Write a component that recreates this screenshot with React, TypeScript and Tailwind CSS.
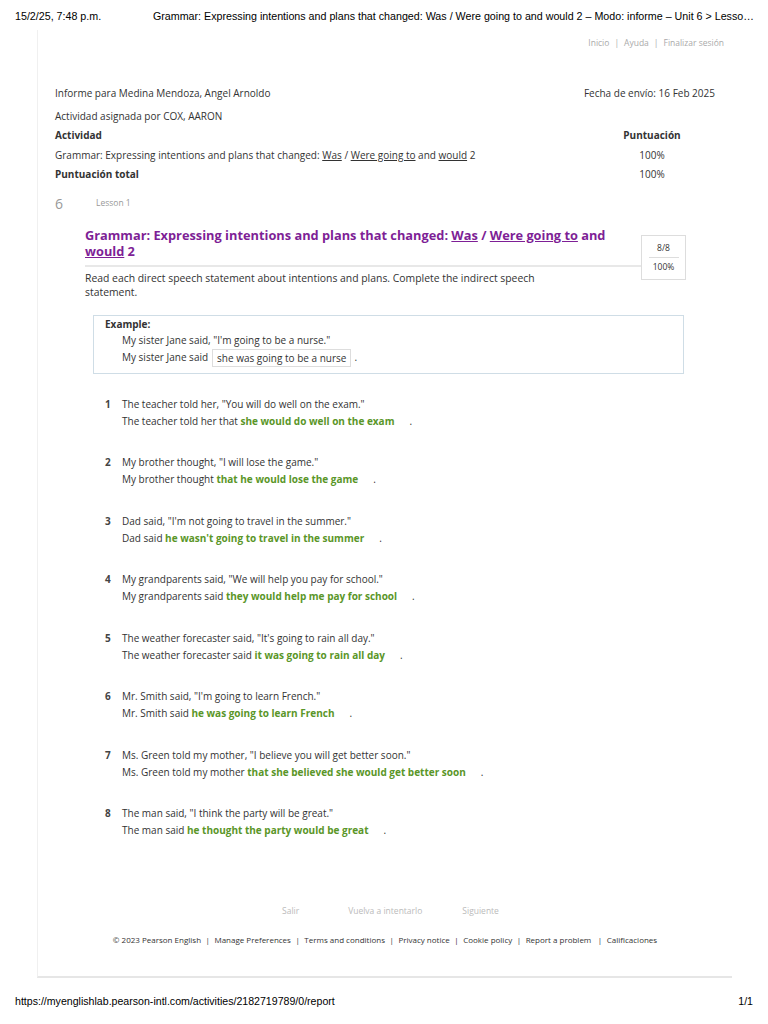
const items = [
  { q: 'The teacher told her, "You will do well on the exam."', lead: "The teacher told her that", a: "she would do well on the exam" },
  { q: 'My brother thought, "I will lose the game."', lead: "My brother thought", a: "that he would lose the game" },
  { q: 'Dad said, "I\'m not going to travel in the summer."', lead: "Dad said", a: "he wasn't going to travel in the summer" },
  { q: 'My grandparents said, "We will help you pay for school."', lead: "My grandparents said", a: "they would help me pay for school" },
  { q: 'The weather forecaster said, "It\'s going to rain all day."', lead: "The weather forecaster said", a: "it was going to rain all day" },
  { q: 'Mr. Smith said, "I\'m going to learn French."', lead: "Mr. Smith said", a: "he was going to learn French" },
  { q: 'Ms. Green told my mother, "I believe you will get better soon."', lead: "Ms. Green told my mother", a: "that she believed she would get better soon" },
  { q: 'The man said, "I think the party will be great."', lead: "The man said", a: "he thought the party would be great" },
];

const footerLinks = ["Manage Preferences", "Terms and conditions", "Privacy notice", "Cookie policy", "Report a problem"];

export default function App() {
  return (
    <div className="flex h-[1024px] w-[768px] flex-col bg-white text-[#333]" style={{ fontFamily: '"Open Sans", sans-serif' }}>
      {/* print header */}
      <div className="flex h-[30px] items-center pl-[15px] pr-[6px] pt-[2px] text-[10.7px] text-black" style={{ fontFamily: '"Liberation Sans", Arial, sans-serif' }}>
        <span className="w-[138px] shrink-0">15/2/25, 7:48 p.m.</span>
        <span className="truncate">Grammar: Expressing intentions and plans that changed: Was / Were going to and would 2 – Modo: informe – Unit 6 &gt; Lesso…</span>
      </div>

      {/* page frame */}
      <div className="ml-[37px] flex h-[948px] w-[695px] flex-col border-b-2 border-l border-b-[#e6e6e6] border-l-[#f0f0f0]">
        <div className="flex h-[24px] items-center justify-end gap-[5px] pr-[8px] pt-[2px] text-[8.5px] text-[#aaa]">
          <span>Inicio</span>
          <span>|</span>
          <span>Ayuda</span>
          <span>|</span>
          <span>Finalizar sesión</span>
        </div>

        {/* report summary */}
        <div className="mt-[30px] px-[17px] text-[10px] leading-[19.5px]">
          <div className="flex justify-between">
            <span>Informe para Medina Mendoza, Angel Arnoldo</span>
            <span>Fecha de envío: 16 Feb 2025</span>
          </div>
          <div className="mt-[3px]">Actividad asignada por COX, AARON</div>
          <div className="flex font-bold">
            <span className="flex-1">Actividad</span>
            <span className="w-[126px] text-center">Puntuación</span>
          </div>
          <div className="flex">
            <span className="flex-1">
              Grammar: Expressing intentions and plans that changed: <u>Was</u> / <u>Were going to</u> and <u>would</u> 2
            </span>
            <span className="w-[126px] text-center">100%</span>
          </div>
          <div className="flex">
            <span className="flex-1 font-bold">Puntuación total</span>
            <span className="w-[126px] text-center">100%</span>
          </div>
        </div>

        {/* lesson header */}
        <div className="mt-[8px] flex items-center pl-[17px] text-[#999]">
          <span className="w-[41px] text-[14px]">6</span>
          <span className="pt-[1px] text-[8.5px]">Lesson 1</span>
        </div>

        {/* activity title + score */}
        <div className="mt-[13px] flex pl-[47px] pr-[46px]">
          <div className="flex-1">
            <h1 className="pr-[16px] text-[12.8px] font-bold leading-[16px] text-[#7e1f96]">
              Grammar: Expressing intentions and plans that changed: <u>Was</u> / <u>Were going to</u> and <u>would</u> 2
            </h1>
            <div className="mt-[6px] h-[2px] bg-[#e8e8e8]" />
            <p className="mt-[4px] w-[470px] text-[10.4px] leading-[14px] text-[#333]">
              Read each direct speech statement about intentions and plans. Complete the indirect speech statement.
            </p>
          </div>
          <div className="mt-[8px] flex h-[45px] w-[45px] shrink-0 flex-col items-center justify-center border border-[#ddd] text-[8.5px] leading-[14px]">
            <span>8/8</span>
            <span className="my-[2px] h-px w-[30px] bg-[#ddd]" />
            <span>100%</span>
          </div>
        </div>

        {/* example */}
        <div className="ml-[55px] mr-[48px] mt-[16px] border border-[#cfdde6] px-[11px] pb-[6px] pt-[1px] text-[10px]">
          <div className="font-bold leading-[15px]">Example:</div>
          <div className="pl-[17px] leading-[16px]">My sister Jane said, "I'm going to be a nurse."</div>
          <div className="flex items-center pl-[17px] pt-[1px]">
            <span>My sister Jane said</span>
            <span className="ml-[4px] mr-[3px] border border-[#ddd] px-[4px] leading-[16px]">she was going to be a nurse</span>
            <span>.</span>
          </div>
        </div>

        {/* questions */}
        <div className="mt-[22px] flex flex-col gap-[24.5px] pl-[67px] text-[10px] leading-[17px]">
          {items.map((it, i) => (
            <div key={i} className="flex">
              <span className="w-[17px] font-bold text-[#444]">{i + 1}</span>
              <div>
                <div>{it.q}</div>
                <div>
                  {it.lead} <span className="font-bold text-[#5a9628]">{it.a}</span>
                  <span className="ml-[15px]">.</span>
                </div>
              </div>
            </div>
          ))}
        </div>

        {/* buttons */}
        <div className="mt-auto flex pl-[244px] text-[8.5px] text-[#bbb]">
          <span>Salir</span>
          <span className="ml-[49px]">Vuelva a intentarlo</span>
          <span className="ml-[40px]">Siguiente</span>
        </div>

        <div className="mb-[30px] mt-[16px] flex justify-center gap-[4.5px] text-[8px] text-[#333]">
          <span>© 2023 Pearson English</span>
          {footerLinks.map((l) => (
            <span key={l} className="flex gap-[4.5px]">
              <span>|</span>
              <span>{l}</span>
            </span>
          ))}
          <span>&nbsp;|</span>
          <span>Calificaciones</span>
        </div>
      </div>

      {/* print footer */}
      <div className="mt-[16px] flex justify-between px-[15px] text-[10.6px] text-black" style={{ fontFamily: '"Liberation Sans", Arial, sans-serif' }}>
        <span>https://myenglishlab.pearson-intl.com/activities/2182719789/0/report</span>
        <span>1/1</span>
      </div>
    </div>
  );
}
